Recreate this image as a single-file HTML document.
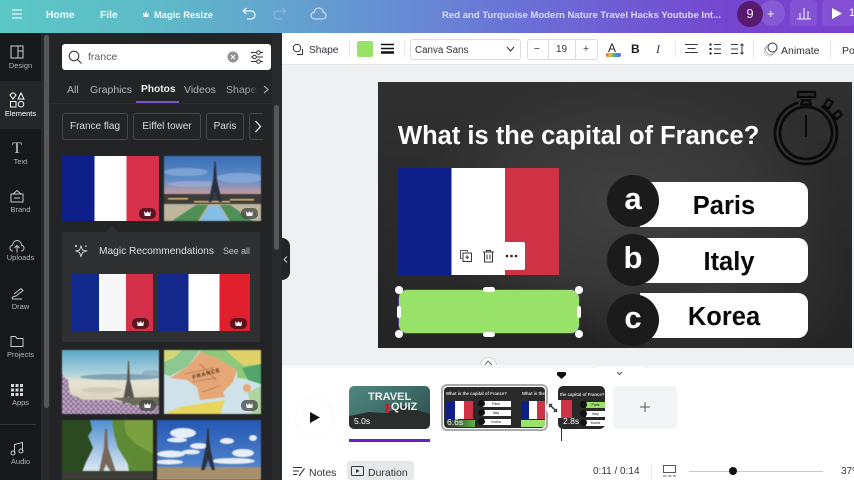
<!DOCTYPE html>
<html><head><meta charset="utf-8">
<style>
*{box-sizing:border-box}
html,body{margin:0;padding:0;width:854px;height:480px;overflow:hidden;background:#fff;font-family:"Liberation Sans",sans-serif}
.a{position:absolute}
.t{position:absolute;white-space:nowrap;line-height:1}
svg{position:absolute;overflow:hidden}
svg.ph{filter:blur(.4px)}
.nav{position:absolute;left:0;width:41px;text-align:center;font-size:7.5px;color:#b4b5b7;line-height:1}
.chip{position:absolute;top:113px;height:27px;border:1px solid #47484b;border-radius:3px;color:#dcdcdd;font-size:10px;line-height:26px;text-align:center}
.tab{position:absolute;top:85px;font-size:10.5px;color:#b5b6b8;line-height:1;white-space:nowrap;font-weight:500}
.crown{position:absolute;width:17px;height:11px;border-radius:5px;background:rgba(60,15,25,.8)}
.crown:after{content:"";position:absolute;left:5px;top:3px;width:7px;height:5px;background:#fff;clip-path:polygon(0 0,28% 45%,50% 0,72% 45%,100% 0,90% 100%,10% 100%)}
.cg{background:rgba(70,70,70,.75)}
.cir{position:absolute;left:607px;width:52px;height:52px;border-radius:50%;background:#1b1b1b;color:#fff;font-weight:bold;font-size:31px;text-align:center;line-height:47px}
.pill{position:absolute;left:640px;width:168px;height:45px;background:#fff;border-radius:0 10px 10px 0;color:#0a0a0a;font-weight:bold;font-size:25.5px;text-align:center;line-height:48px}
.hd{position:absolute;background:#fff;border-radius:50%;width:8px;height:8px}
.tool{position:absolute;top:46px;font-size:10.2px;color:#2f3237;line-height:1;white-space:nowrap}
</style></head>
<body>
<!-- top bar -->
<div class="a" style="left:0;top:0;width:854px;height:33px;background:linear-gradient(90deg,#5ac8c6 0%,#5fb8c8 20%,#6690d3 45%,#6b6fd6 62%,#7446cf 85%,#7a3fd0 100%)"></div>
<svg style="left:11px;top:8px" width="12" height="12"><path d="M1 2H11M1 6H11M1 10H11" stroke="#e8f4f6" stroke-width="1.3"/></svg>
<div class="t" style="left:46px;top:11px;font-size:10.3px;color:#fff;font-weight:bold;opacity:.93">Home</div>
<div class="t" style="left:100px;top:11px;font-size:10.3px;color:#fff;font-weight:bold;opacity:.93">File</div>
<svg style="left:142px;top:10px" width="8" height="8"><path d="M1 2L2.500 4.500L4 1L5.500 4.500L7 2L6.300 7H1.700Z" fill="#f0f5fb"/></svg>
<div class="t" style="left:154px;top:11px;font-size:9.3px;color:#fff;font-weight:bold;opacity:.93;letter-spacing:.05px">Magic Resize</div>
<svg style="left:241px;top:6px" width="16" height="16"><path d="M2 5H10C12.800 5 14 7 14 9C14 11.500 12 13 10 13H6M2 5L5.500 2M2 5L5.500 8" fill="none" stroke="#eef4fa" stroke-width="1.200"/></svg>
<svg style="left:272px;top:6px" width="16" height="16"><path d="M14 5H6C3.200 5 2 7 2 9C2 11.500 4 13 6 13H10M14 5L10.500 2M14 5L10.500 8" fill="none" stroke="#8fb3de" stroke-width="1.200"/></svg>
<svg style="left:310px;top:6px" width="17" height="15"><path d="M5 13C2.500 13 1 11.500 1 9.500C1 7.500 2.500 6.300 4 6.300C4.500 3.500 6.500 2 8.800 2C11.500 2 13 4 13.200 6.300C15 6.500 16 8 16 9.700C16 11.700 14.500 13 12.500 13Z" fill="none" stroke="#dbe7f4" stroke-width="1.100"/></svg>
<div class="t" style="left:442px;top:11px;font-size:9.55px;color:#e4e4f6;font-weight:bold;opacity:.92">Red and Turquoise Modern Nature Travel Hacks Youtube Int...</div>
<div class="a" style="left:759px;top:0;width:26px;height:26px;border-radius:50%;background:rgba(255,255,255,.12)"></div>
<div class="a" style="left:737px;top:1px;width:26px;height:26px;border-radius:50%;background:#581a6e;color:#f0e6f5;font-size:13px;text-align:center;line-height:26px">9</div>
<div class="t" style="left:767px;top:7px;font-size:13px;color:#eee">+</div>
<div class="a" style="left:790px;top:0;width:27px;height:26px;border-radius:4px;background:rgba(255,255,255,.09)"></div>
<svg style="left:796px;top:6px" width="16" height="16"><path d="M1 13H15M4 13V7M8 13V2M12 13V5" stroke="#eef" stroke-width="1.100" fill="none"/></svg>
<div class="a" style="left:822px;top:0;width:32px;height:26px;border-radius:4px;background:rgba(255,255,255,.09)"></div>
<svg style="left:831px;top:7px" width="12" height="13"><path d="M1 1L11 6.500L1 12Z" fill="#fff"/></svg>
<div class="t" style="left:849px;top:8px;font-size:11px;color:#fff">1</div>

<!-- sidebar -->
<div class="a" style="left:0;top:33px;width:41px;height:447px;background:#17181a"></div>
<div class="a" style="left:0;top:81px;width:41px;height:48px;background:#252628"></div>
<div class="a" style="left:41px;top:33px;width:9px;height:447px;background:#28292b"></div>
<div class="a" style="left:44px;top:35px;width:5px;height:373px;border-radius:3px;background:#55565a"></div>
<div class="a" style="left:50px;top:33px;width:232px;height:447px;background:#232426"></div>
<div class="a" style="left:272px;top:33px;width:10px;height:447px;background:#28292b"></div>
<div class="a" style="left:274px;top:105px;width:5px;height:145px;border-radius:3px;background:#55565a"></div>

<svg style="left:10px;top:45px" width="14" height="14"><path d="M1 1H13V13H1ZM8 1V13M8 6H13" fill="none" stroke="#cfd0d2" stroke-width="1"/></svg>
<div class="nav" style="top:62px">Design</div>
<svg style="left:9px;top:92px" width="16" height="16"><path d="M1 3L3 1H5L7 3L4 7ZM12 1L15 7H9ZM1.500 9.500H7V15H1.500Z" fill="none" stroke="#fff" stroke-width="1"/><circle cx="12" cy="12.200" r="2.800" fill="none" stroke="#fff"/></svg>
<div class="nav" style="top:110px;color:#fff">Elements</div>
<div class="t" style="left:9px;top:141px;width:16px;text-align:center;font-family:'Liberation Serif',serif;font-size:16px;color:#c8c9cb">T</div>
<div class="nav" style="top:158px">Text</div>
<svg style="left:10px;top:189px" width="14" height="14"><path d="M1 5H13V13H1ZM3 5L7 1.500L11 5M4 9H10" fill="none" stroke="#c8c9cb" stroke-width="1"/></svg>
<div class="nav" style="top:206px">Brand</div>
<svg style="left:9px;top:239px" width="16" height="14"><path d="M4 12C2 12 1 10.500 1 9C1 7.500 2.300 6.500 3.500 6.300C3.800 3.500 5.800 1.500 8 1.500C10.500 1.500 12.200 3.500 12.500 6.300C14 6.500 15 7.700 15 9C15 10.500 14 12 12 12M8 13.500V6.500M5.500 9L8 6.500L10.500 9" fill="none" stroke="#c8c9cb" stroke-width="1"/></svg>
<div class="nav" style="top:254px">Uploads</div>
<svg style="left:10px;top:287px" width="14" height="14"><path d="M4 7L11 1.500L13 3.500L6 9C3 9.500 1 10.500 2.500 12H12" fill="none" stroke="#c8c9cb" stroke-width="1"/></svg>
<div class="nav" style="top:303px">Draw</div>
<svg style="left:10px;top:335px" width="14" height="13"><path d="M1 1.500H5.500L7 3.500H13V11.500H1Z" fill="none" stroke="#c8c9cb" stroke-width="1"/></svg>
<div class="nav" style="top:351px">Projects</div>
<svg style="left:11px;top:384px" width="12" height="12"><g fill="#d5d6d8"><rect x="0" y="0" width="3" height="3"/><rect x="4.500" y="0" width="3" height="3"/><rect x="9" y="0" width="3" height="3"/><rect x="0" y="4.500" width="3" height="3"/><rect x="4.500" y="4.500" width="3" height="3"/><rect x="9" y="4.500" width="3" height="3"/><rect x="0" y="9" width="3" height="3"/><rect x="4.500" y="9" width="3" height="3"/><rect x="9" y="9" width="3" height="3"/></g></svg>
<div class="nav" style="top:399px">Apps</div>
<div class="a" style="left:0;top:424px;width:36px;height:1px;background:#333436"></div>
<svg style="left:10px;top:441px" width="14" height="15"><path d="M4.500 12V3.500L12.500 1.500V10" fill="none" stroke="#c8c9cb" stroke-width="1"/><circle cx="3" cy="12" r="2" fill="none" stroke="#c8c9cb"/><circle cx="11" cy="10" r="2" fill="none" stroke="#c8c9cb"/></svg>
<div class="nav" style="top:458px">Audio</div>

<!-- search -->
<div class="a" style="left:62px;top:44px;width:209px;height:26px;background:#fff;border-radius:3px"></div>
<svg style="left:68px;top:50px" width="15" height="15"><circle cx="6" cy="6" r="4.800" fill="none" stroke="#33363a" stroke-width="1.100"/><path d="M9.500 9.500L13.500 13.500" stroke="#33363a" stroke-width="1.100"/></svg>
<div class="t" style="left:88px;top:52px;font-size:10.500px;color:#5a5d62">france</div>
<svg style="left:227px;top:51px" width="12" height="12"><circle cx="6" cy="6" r="5.500" fill="#8f9194"/><path d="M4 4L8 8M8 4L4 8" stroke="#fff" stroke-width="1"/></svg>
<svg style="left:250px;top:50px" width="14" height="14"><path d="M1 2.500H13M1 7H13M1 11.500H13" stroke="#33363a" stroke-width="1"/><circle cx="8.500" cy="2.500" r="1.800" fill="#fff" stroke="#33363a"/><circle cx="4.500" cy="7" r="1.800" fill="#fff" stroke="#33363a"/><circle cx="8.500" cy="11.500" r="1.800" fill="#fff" stroke="#33363a"/></svg>

<!-- tabs -->
<div class="tab" style="left:67px">All</div>
<div class="tab" style="left:90px">Graphics</div>
<div class="tab" style="left:141px;color:#f0f0f0;font-weight:bold;font-size:10.2px">Photos</div>
<div class="tab" style="left:184px">Videos</div>
<div class="tab" style="left:226px;width:32px;overflow:hidden;color:#a5a6a8;-webkit-mask-image:linear-gradient(90deg,#000 65%,transparent)">Shapes</div>
<svg style="left:263px;top:85px" width="6" height="9"><path d="M1 1L5 4.500L1 8" fill="none" stroke="#b5b6b8" stroke-width="1.100"/></svg>
<div class="a" style="left:136px;top:101px;width:43px;height:2px;background:#7a54c8"></div>
<div class="a" style="left:50px;top:103px;width:222px;height:1px;background:#2c2d2f"></div>

<div class="chip" style="left:62px;width:66px">France flag</div>
<div class="chip" style="left:133px;width:68px">Eiffel tower</div>
<div class="chip" style="left:206px;width:38px">Paris</div>
<div class="chip" style="left:249px;width:14px;border-right:none;border-radius:3px 0 0 3px"></div>
<svg style="left:254px;top:120px" width="8" height="13"><path d="M1.500 1L6.500 6.500L1.500 12" fill="none" stroke="#e8e8e8" stroke-width="1.300"/></svg>

<!-- images row 1 -->
<div class="a" style="left:62px;top:156px;width:97px;height:65px;background:linear-gradient(90deg,#0e1f8a 33.300%,#fff 33.300% 66.600%,#d6304a 66.600%)"></div>
<div class="crown" style="left:139px;top:208px"></div>
<svg class="ph" style="left:164px;top:156px" width="97" height="65" viewBox="0 0 97 65">
<defs><linearGradient id="s1" x1="0" y1="0" x2="0" y2="1"><stop offset="0" stop-color="#3a6fb5"/><stop offset=".55" stop-color="#5f8cc6"/><stop offset=".85" stop-color="#b79aa8"/><stop offset="1" stop-color="#c9a0a0"/></linearGradient></defs>
<rect width="97" height="42" fill="url(#s1)"/>
<ellipse cx="22" cy="16" rx="22" ry="4" fill="#8fb0dc" opacity=".7"/><ellipse cx="76" cy="22" rx="24" ry="5" fill="#8fb0dc" opacity=".7"/><ellipse cx="30" cy="28" rx="26" ry="3" fill="#9fb5da" opacity=".6"/>
<rect y="38" width="97" height="11" fill="#3d3c3a"/>
<g fill="#e5c070"><rect x="4" y="42" width="20" height="1.500"/><rect x="66" y="43" width="24" height="1.500"/><rect x="30" y="45" width="36" height="1.500"/></g>
<path d="M44.500 46L49 24L50.500 5L51.500 5L53 24L58 46H55L51 37L47.500 46Z" fill="#2a3040"/>
<rect y="48" width="97" height="17" fill="#bfb6a0"/>
<path d="M8 65L32 49H44L34 65ZM89 65L66 49H56L66 65Z" fill="#4f8f55"/>
<path d="M36 65L45 50H56L64 65Z" fill="#86bde6"/>
</svg>
<div class="crown cg" style="left:241px;top:208px"></div>

<!-- magic recs -->
<div class="a" style="left:62px;top:232px;width:198px;height:110px;background:#2f3032"></div>
<div class="a" style="left:106px;top:226px;width:12px;height:6px;background:#2f3032;clip-path:polygon(50% 0,100% 100%,0 100%)"></div>
<svg style="left:74px;top:244px" width="14" height="14"><path d="M7 2L8.500 6L12.500 7L8.500 8.500L7 12.500L5.500 8.500L2 7L5.500 6Z" fill="none" stroke="#dedede" stroke-width=".9"/><circle cx="2" cy="2" r="1" fill="#eee"/><circle cx="12" cy="2" r=".8" fill="#eee"/></svg>
<div class="t" style="left:99px;top:247px;font-size:10.200px;color:#dfdfe0">Magic Recommendations</div>
<div class="t" style="left:223px;top:247px;font-size:8.800px;color:#c3c4c6">See all</div>
<div class="a" style="left:72px;top:274px;width:81px;height:57px;background:linear-gradient(90deg,#122a8c 33.300%,#f7f7f9 33.300% 66.600%,#d5304a 66.600%)"></div>
<div class="crown" style="left:132px;top:318px"></div>
<div class="a" style="left:158px;top:274px;width:92px;height:57px;background:linear-gradient(90deg,#14288c 33%,#fff 33% 67%,#e01f2d 67%)"></div>
<div class="crown" style="left:230px;top:318px"></div>

<!-- row 3 -->
<svg class="ph" style="left:62px;top:350px" width="97" height="64" viewBox="0 0 97 64">
<defs><linearGradient id="s2" x1="0" y1="0" x2="0" y2="1"><stop offset="0" stop-color="#5ca9c9"/><stop offset=".35" stop-color="#a9d0da"/><stop offset=".5" stop-color="#e8e4d2"/><stop offset=".8" stop-color="#d9d2bd"/></linearGradient>
<pattern id="fl" width="5" height="5" patternUnits="userSpaceOnUse"><rect width="5" height="5" fill="#8a7490"/><circle cx="1.500" cy="1.500" r="1.500" fill="#c5a4cc"/><circle cx="3.800" cy="3.800" r="1.100" fill="#d8c2da"/></pattern></defs>
<rect width="97" height="64" fill="url(#s2)"/>
<ellipse cx="58" cy="27" rx="40" ry="3" fill="#6f95ac" opacity=".8"/>
<ellipse cx="90" cy="24" rx="10" ry="4" fill="#8aa7ba" opacity=".7"/>
<ellipse cx="40" cy="40" rx="20" ry="3" fill="#c4c4b0" opacity=".7"/>
<path d="M60 56L65 30L66 11L67 11L68 30L74 56H70L66.500 46L63 56Z" fill="#55544e"/>
<path d="M0 24L6 30L8 44L22 50L50 50L75 56L97 55V64H0Z" fill="url(#fl)"/>
<path d="M50 48L97 47V56L72 55Z" fill="#6b6a58"/>
</svg>
<div class="crown cg" style="left:139px;top:400px"></div>
<svg class="ph" style="left:164px;top:350px" width="97" height="64" viewBox="0 0 97 64">
<rect width="97" height="64" fill="#cfe2ea"/>
<path d="M0 0H36L23 17L6 26L0 24Z" fill="#8cc88f"/><path d="M0 0H18L10 8L0 12Z" fill="#d4d777"/>
<path d="M36 0H97V30L73 28L73 20L53 8L36 2Z" fill="#8ec97a"/><path d="M62 0H97V14L80 16L70 8Z" fill="#e0d268"/><path d="M78 18L97 14V34L84 30Z" fill="#4fa56c"/>
<path d="M6 28L23 17L36 2L53 8L73 20L69 32L59 42L61 47L36 50L33 37L23 30Z" fill="#e6a777"/>
<path d="M1 64L16 57L61 50L56 64Z" fill="#e7d55c"/><path d="M84 42L97 36V64H88Z" fill="#a6d28d" opacity=".8"/><circle cx="83" cy="38" r="4" fill="#e6a777"/>
<path d="M20 24L50 18M28 32L52 28M38 42L56 36M36 14L52 30" stroke="#93603c" stroke-width=".6"/>
<text x="29" y="29" font-size="5.500" font-weight="bold" fill="#3a2517" font-family="Liberation Sans" transform="rotate(-15 29 29)" letter-spacing="1">FRANCE</text>
</svg>
<div class="crown cg" style="left:241px;top:400px"></div>

<!-- row 4 -->
<svg class="ph" style="left:62px;top:420px" width="91" height="60" viewBox="0 0 91 60">
<defs><linearGradient id="s3" x1="0" y1="0" x2="0" y2="1"><stop offset="0" stop-color="#4f8fd0"/><stop offset=".8" stop-color="#d3e3ee"/></linearGradient></defs>
<rect width="91" height="60" fill="url(#s3)"/>
<path d="M0 0H28L30 10L26 16L31 28L24 42L20 52L0 60Z" fill="#2c4a20"/>
<path d="M50 0H91V60H68L66 44L56 28L52 14Z" fill="#5e8a36"/><path d="M62 0H91V34L74 24L64 14Z" fill="#7aa040"/>
<path d="M37 52L42 28L43 9L45 9L46 28L54 52H49L44 44L41 52Z" fill="#78685a"/>
<rect y="51" width="91" height="9" fill="#3c3d36"/>
</svg>
<svg class="ph" style="left:157px;top:420px" width="104" height="60" viewBox="0 0 104 60">
<defs><linearGradient id="s4" x1="0" y1="0" x2="0" y2="1"><stop offset="0" stop-color="#2458b4"/><stop offset="1" stop-color="#5d8fd0"/></linearGradient></defs>
<rect width="104" height="60" fill="url(#s4)"/><g fill="#e8eef5"><ellipse cx="26" cy="13" rx="13" ry="5"/><ellipse cx="20" cy="20" rx="10" ry="2.500"/><ellipse cx="70" cy="21" rx="7" ry="3"/><ellipse cx="42" cy="26" rx="9" ry="3"/><ellipse cx="14" cy="34" rx="14" ry="3.500"/><ellipse cx="34" cy="32" rx="9" ry="2.500"/><ellipse cx="86" cy="33" rx="11" ry="4"/><ellipse cx="12" cy="42" rx="14" ry="2.500"/><ellipse cx="76" cy="41" rx="22" ry="3"/><ellipse cx="96" cy="18" rx="4" ry="3"/></g>
<rect y="47" width="104" height="13" fill="#a58f6c"/>
<path d="M44 50L49 26L50.500 8L51.500 8L53 26L58 50H55L51 40L47.500 50Z" fill="#2b3344"/>
</svg>

<!-- main area -->
<div class="a" style="left:282px;top:33px;width:572px;height:447px;background:#eef0f2"></div>
<div class="a" style="left:282px;top:33px;width:572px;height:32px;background:#fff;border-bottom:1px solid #e6e7e9"></div>
<svg style="left:292px;top:43px" width="13" height="13"><circle cx="5" cy="5" r="3.800" fill="none" stroke="#33363a"/><path d="M10.500 6V11.500H5" fill="none" stroke="#33363a"/></svg>
<div class="tool" style="left:309px">Shape</div>
<div class="a" style="left:357px;top:41px;width:16px;height:16px;background:#98e26a;border-radius:2px"></div>
<svg style="left:381px;top:43px" width="13" height="12"><path d="M0 1.500H13M0 5.500H13" stroke="#111" stroke-width="1.500"/><path d="M0 9.500H13" stroke="#111" stroke-width="2.500"/></svg>
<div class="a" style="left:349px;top:41px;width:1px;height:16px;background:#e6e7e9"></div>
<div class="a" style="left:404px;top:41px;width:1px;height:16px;background:#e6e7e9"></div>
<div class="a" style="left:410px;top:39px;width:111px;height:21px;border:1px solid #dcdde0;border-radius:3px"></div>
<div class="tool" style="left:415px;font-size:9.800px">Canva Sans</div>
<svg style="left:506px;top:46px" width="9" height="7"><path d="M1 1L4.500 5L8 1" fill="none" stroke="#33363a" stroke-width="1.100"/></svg>
<div class="a" style="left:527px;top:39px;width:71px;height:21px;border:1px solid #dcdde0;border-radius:3px"></div>
<div class="a" style="left:548px;top:39px;width:1px;height:21px;background:#dcdde0"></div>
<div class="a" style="left:575px;top:39px;width:1px;height:21px;background:#dcdde0"></div>
<div class="tool" style="left:534px;top:45px">−</div>
<div class="tool" style="left:556px;top:45px;font-size:10px">19</div>
<div class="tool" style="left:583px;top:45px">+</div>
<div class="tool" style="left:608px;top:42px;font-size:12px;color:#222">A</div>
<div class="a" style="left:606px;top:53px;width:15px;height:4px;border-radius:2px;background:linear-gradient(90deg,#e64a4a,#f0c040,#50c060,#4090e0,#9050d0)"></div>
<div class="tool" style="left:631px;top:43px;font-size:12px;font-weight:bold;color:#1a1c20">B</div>
<div class="tool" style="left:656px;top:43px;font-size:12px;font-style:italic;font-family:'Liberation Serif',serif;color:#333">I</div>
<div class="a" style="left:675px;top:41px;width:1px;height:16px;background:#e6e7e9"></div>
<svg style="left:685px;top:43px" width="13" height="12"><path d="M0 1.500H13M2.500 5.500H10.500M0 9.500H13" stroke="#33363a" stroke-width="1"/></svg>
<svg style="left:709px;top:43px" width="12" height="12"><path d="M5 1.500H12M5 6H12M5 10.500H12" stroke="#33363a"/><path d="M.500 1.500H2.500M.500 6H2.500M.500 10.500H2.500" stroke="#111" stroke-width="2"/></svg>
<svg style="left:731px;top:43px" width="14" height="12"><path d="M0 1.500H7M0 6H7M0 10.500H7" stroke="#33363a"/><path d="M11 1V11M9.500 2.500L11 1L12.500 2.500M9.500 9.500L11 11L12.500 9.500" fill="none" stroke="#33363a"/></svg>
<div class="a" style="left:753px;top:41px;width:1px;height:16px;background:#e6e7e9"></div>
<svg style="left:763px;top:42px" width="16" height="15"><circle cx="6" cy="9" r="5" fill="none" stroke="#c4c5c8" stroke-width=".8"/><circle cx="7.500" cy="7.500" r="5" fill="#fff" stroke="#999" stroke-width=".8"/><circle cx="9.500" cy="5.500" r="4.500" fill="#fff" stroke="#33363a"/></svg>
<div class="tool" style="left:781px;font-size:10.500px">Animate</div>
<div class="a" style="left:830px;top:41px;width:1px;height:16px;background:#e6e7e9"></div>
<div class="tool" style="left:842px;font-size:10.500px">Po</div>

<!-- canvas -->
<div class="a" style="left:378px;top:82px;width:474px;height:266px;background:radial-gradient(ellipse 45% 50% at 52% 45%,#414141 0%,#373737 60%,rgba(45,45,45,0) 100%),radial-gradient(ellipse 30% 40% at 70% 75%,#3a3a3a 0%,rgba(50,50,50,0) 100%),linear-gradient(180deg,#303030,#242424)"></div>
<div class="t" style="left:398px;top:124px;font-size:25.500px;font-weight:bold;color:#fff">What is the capital of France?</div>
<svg style="left:770px;top:84px" width="76" height="90" viewBox="0 0 76 90">
<g fill="none" stroke="#0a0a0a"><path d="M51.500 22.200A31 31 0 1 1 22.900 20.900" stroke-width="2.800"/><path d="M23 20.500L28 18.500" stroke-width="2.800"/><circle cx="36" cy="49" r="26" stroke-width="2.800"/><path d="M36 31V53" stroke-width="2"/><rect x="28" y="8" width="17" height="5" stroke-width="2.400"/><path d="M32 20V16.500H40V20M30 20.500H42" stroke-width="2.400"/><rect x="55.500" y="16" width="5.500" height="7.500" transform="rotate(30 58 20)" stroke-width="2.200"/><rect x="64.500" y="27" width="5.500" height="7" transform="rotate(50 67 31)" stroke-width="2.200"/></g>
</svg>
<div class="a" style="left:398px;top:168px;width:161px;height:107px;background:linear-gradient(90deg,#0e1f8a 33.300%,#fff 33.300% 66.600%,#cf3145 66.600%)"></div>

<div class="pill" style="top:182px">Paris</div>
<div class="cir" style="top:175px">a</div>
<div class="pill" style="top:238px;padding-left:10px">Italy</div>
<div class="cir" style="top:234px">b</div>
<div class="pill" style="top:293px">Korea</div>
<div class="cir" style="top:294px">c</div>

<!-- floating menu -->
<div class="a" style="left:452px;top:242px;width:73px;height:28px;background:#fff;border-radius:2px"></div>
<svg style="left:459px;top:249px" width="14" height="14"><path d="M3 9.500H1.500V1.500H8.500V3" fill="none" stroke="#55585c"/><rect x="4" y="4" width="8.500" height="8.500" fill="none" stroke="#33363a"/><path d="M6.500 8.200H10M8.200 6.500V10" stroke="#33363a"/></svg>
<svg style="left:482px;top:249px" width="13" height="14"><path d="M1 3H12M4.500 3V1.500H8.500V3M2.500 3V13H10.500V3M5 5.500V10.500M8 5.500V10.500" fill="none" stroke="#33363a"/></svg>
<svg style="left:505px;top:254px" width="13" height="4"><circle cx="2" cy="2" r="1.300" fill="#222"/><circle cx="6.500" cy="2" r="1.300" fill="#222"/><circle cx="11" cy="2" r="1.300" fill="#222"/></svg>

<!-- selected shape -->
<div class="a" style="left:398px;top:289px;width:182px;height:45px;background:#98e26a;border:1.500px solid #53358e;border-radius:9px"></div>
<div class="hd" style="left:395px;top:286px"></div><div class="hd" style="left:575px;top:286px"></div>
<div class="hd" style="left:395px;top:330px"></div><div class="hd" style="left:575px;top:330px"></div>
<div class="a" style="left:483px;top:287px;width:12px;height:5px;border-radius:3px;background:#fff"></div>
<div class="a" style="left:483px;top:332px;width:12px;height:5px;border-radius:3px;background:#fff"></div>
<div class="a" style="left:397px;top:306px;width:4px;height:12px;border-radius:2px;background:#fff"></div>
<div class="a" style="left:577px;top:306px;width:4px;height:12px;border-radius:2px;background:#fff"></div>

<!-- rotate handle -->
<div class="a" style="left:480px;top:357px;width:17px;height:17px;border-radius:50%;background:#fff;border:1px solid #d0d1d4"></div>
<svg style="left:484px;top:360px" width="9" height="6"><path d="M1 5L4 1L8 5" fill="none" stroke="#666"/></svg>

<!-- timeline -->
<div class="a" style="left:282px;top:366px;width:572px;height:114px;background:#fff;border-top:1px solid #e1e2e5"></div>
<div class="a" style="left:282px;top:365px;width:572px;height:3px;background:#f6f6f7"></div>
<div class="a" style="left:597px;top:367px;width:45px;height:4px;background:#fff"></div>
<svg style="left:616px;top:371px" width="7" height="5"><path d="M1 1L3.500 3.500L6 1" fill="none" stroke="#555"/></svg>
<div class="a" style="left:296px;top:399px;width:37px;height:37px;border-radius:50%;background:#fff;box-shadow:0 0 3px rgba(0,0,0,.06)"></div>
<svg style="left:309px;top:411px" width="12" height="13"><path d="M1 1L11 6.500L1 12Z" fill="#111"/></svg>

<!-- clip 1 -->
<div class="a" style="left:349px;top:386px;width:81px;height:43px;border-radius:5px;overflow:hidden;background:linear-gradient(135deg,#52867f 0%,#3f6e6a 50%,#2c4d4a 100%)">
<svg class="a" style="left:0;top:0" width="81" height="43"><path d="M0 43V30L20 26L36 27L55 20L81 28V43Z" fill="#2a2f2e"/><rect x="36" y="18" width="4" height="9" fill="#b52935"/></svg>
<div class="t" style="left:19px;top:6px;font-size:11px;font-weight:bold;color:#eee">TRAVEL</div>
<div class="t" style="left:42px;top:16px;font-size:11px;font-weight:bold;color:#eee">QUIZ</div>
<div class="t" style="left:5px;top:31px;font-size:8.500px;color:#fff">5.0s</div>
</div>
<div class="a" style="left:349px;top:439px;width:81px;height:2.500px;background:#6a1fcc"></div>

<!-- clip 2 -->
<div class="a" style="left:441px;top:384px;width:107px;height:47px;border-radius:6px;border:2px solid #a9a9ae;background:#fff;padding:1px"></div>
<div class="a" style="left:444px;top:387px;width:101px;height:41px;border-radius:4px;overflow:hidden;background:#2a2a2a">
<div class="t" style="left:2px;top:5px;font-size:4.300px;font-weight:bold;color:#ddd">What is the capital of France?</div>
<div class="t" style="left:78px;top:5px;font-size:4.300px;font-weight:bold;color:#ddd">What is the c</div>
<div class="a" style="left:2px;top:14px;width:27px;height:18px;background:linear-gradient(90deg,#0e1f8a 33%,#fff 33% 66%,#cf3145 66%)"></div>
<div class="a" style="left:77px;top:14px;width:24px;height:18px;background:linear-gradient(90deg,#0e1f8a 33%,#fff 33% 66%,#cf3145 66%)"></div>
<div class="a" style="left:77px;top:33px;width:24px;height:7px;background:#98e26a"></div>
<div class="a" style="left:2px;top:33px;width:29px;height:7px;background:linear-gradient(90deg,#2a2a2a,#5fb04a)"></div>
<div class="a" style="left:37px;top:14px;width:30px;height:6px;background:#fff;color:#111;font-size:3.500px;text-align:center;line-height:6px">Paris</div>
<div class="a" style="left:37px;top:23px;width:30px;height:6px;background:#fff;color:#111;font-size:3.500px;text-align:center;line-height:6px">Italy</div>
<div class="a" style="left:37px;top:32px;width:30px;height:6px;background:#fff;color:#111;font-size:3.500px;text-align:center;line-height:6px">Korea</div>
<div class="a" style="left:34px;top:13px;width:7px;height:7px;border-radius:50%;background:#111"></div>
<div class="a" style="left:34px;top:22px;width:7px;height:7px;border-radius:50%;background:#111"></div>
<div class="a" style="left:34px;top:31px;width:7px;height:7px;border-radius:50%;background:#111"></div>
<div class="t" style="left:3px;top:31px;font-size:8.500px;color:#fff">6.6s</div>
</div>

<!-- clip 3 -->
<div class="a" style="left:558px;top:386px;width:47px;height:43px;border-radius:5px;overflow:hidden;background:#2a2a2a">
<div class="t" style="left:2px;top:7px;font-size:4.300px;font-weight:bold;color:#ddd">the capital of France?</div>
<div class="a" style="left:0;top:14px;width:14px;height:18px;background:linear-gradient(90deg,#fff 20%,#cf3145 20%)"></div>
<div class="a" style="left:28px;top:16px;width:19px;height:6px;background:#98e26a;color:#111;font-size:3.500px;line-height:6px;text-align:center">Paris</div>
<div class="a" style="left:28px;top:25px;width:19px;height:6px;background:#fff;color:#111;font-size:3.500px;line-height:6px;text-align:center">Italy</div>
<div class="a" style="left:28px;top:34px;width:19px;height:6px;background:#fff;color:#111;font-size:3.500px;line-height:6px;text-align:center">Korea</div>
<div class="a" style="left:22px;top:15px;width:7px;height:7px;border-radius:50%;background:#111"></div>
<div class="a" style="left:22px;top:24px;width:7px;height:7px;border-radius:50%;background:#111"></div>
<div class="a" style="left:22px;top:33px;width:7px;height:7px;border-radius:50%;background:#111"></div>
<div class="t" style="left:5px;top:31px;font-size:8.500px;color:#fff">2.8s</div>
</div>
<!-- transition & playhead -->
<div class="a" style="left:546px;top:401px;width:14px;height:14px;border-radius:50%;background:#fff"></div>
<svg style="left:548px;top:403px" width="10" height="10"><path d="M1 1L9 9M1 4L4 1M6 9L9 6" stroke="#333" stroke-width="1.500" fill="none"/></svg>
<div class="a" style="left:561px;top:425px;width:1px;height:16px;background:#333"></div>
<svg style="left:557px;top:372px" width="9" height="7"><path d="M0 1Q0 0 1 0H8Q9 0 9 1V3L4.500 7L0 3Z" fill="#111"/></svg>
<!-- add -->
<div class="a" style="left:613px;top:386px;width:64px;height:43px;border-radius:4px;background:#f3f4f6"></div>
<svg style="left:639px;top:401px" width="12" height="12"><path d="M6 1V11M1 6H11" stroke="#55585c" stroke-width="1"/></svg>

<!-- footer -->
<svg style="left:293px;top:466px" width="13" height="12"><path d="M0 1.500H9M0 5H6M0 8.500H4M6 10L11.500 2.500" stroke="#33363a" stroke-width="1.100" fill="none"/></svg>
<div class="t" style="left:309px;top:468px;font-size:10.500px;color:#2f3237">Notes</div>
<div class="a" style="left:347px;top:461px;width:67px;height:19px;background:#e7e8ea;border-radius:3px"></div>
<svg style="left:351px;top:466px" width="13" height="10"><rect x=".5" y=".5" width="12" height="9" rx="1" fill="none" stroke="#33363a"/><path d="M5 3L8.500 5L5 7Z" fill="#33363a"/></svg>
<div class="t" style="left:368px;top:468px;font-size:10.500px;color:#2f3237">Duration</div>
<div class="t" style="left:593px;top:467px;font-size:10px;color:#2f3237">0:11 / 0:14</div>
<div class="a" style="left:651px;top:464px;width:1px;height:16px;background:#e8e9eb"></div>
<svg style="left:663px;top:465px" width="14" height="14"><rect x=".5" y=".5" width="12" height="7" fill="none" stroke="#55585c"/><path d="M0 11H3.500M5 11H8.500M10 11H13" stroke="#b0b1b4" stroke-width="2"/></svg>
<div class="a" style="left:689px;top:471px;width:134px;height:1px;background:#c6c7ca"></div>
<div class="a" style="left:729px;top:467px;width:8px;height:8px;border-radius:50%;background:#111"></div>
<div class="t" style="left:841px;top:467px;font-size:10px;color:#2f3237">37%</div>

<!-- collapse tab -->
<div class="a" style="left:282px;top:238px;width:8px;height:42px;background:#232426;border-radius:0 8px 8px 0"></div>
<svg style="left:283px;top:256px" width="5" height="7"><path d="M4 .5L1 3.500L4 6.500" fill="none" stroke="#ccc"/></svg>
</body></html>
